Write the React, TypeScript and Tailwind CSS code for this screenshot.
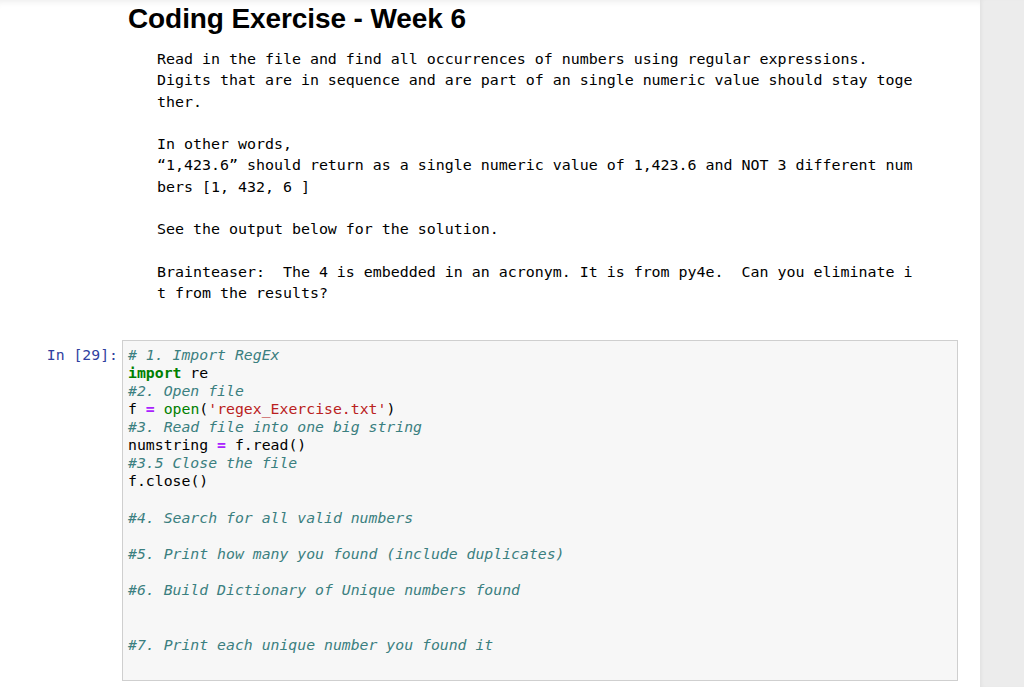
const mono = "font-['DejaVu_Sans_Mono','Liberation_Mono',monospace]";

const mdLines = [
  "Read in the file and find all occurrences of numbers using regular expressions.",
  "Digits that are in sequence and are part of an single numeric value should stay toge",
  "ther.",
  "",
  "In other words,",
  "\u201c1,423.6\u201d should return as a single numeric value of 1,423.6 and NOT 3 different num",
  "bers [1, 432, 6 ]",
  "",
  "See the output below for the solution.",
  "",
  "Brainteaser:  The 4 is embedded in an acronym. It is from py4e.  Can you eliminate i",
  "t from the results?",
];

function Comment({ children }: { children: React.ReactNode }) {
  return <span className="italic text-[#3b7f80]">{children}</span>;
}

function Op({ children }: { children: React.ReactNode }) {
  return <span className="font-bold text-[#aa22ff]">{children}</span>;
}

export default function App() {
  return (
    <div className="flex h-[687px] w-[1024px] overflow-hidden bg-white">
      <main className="w-[980px] shadow-[inset_0_7px_6px_-5px_rgba(0,0,0,0.07)]">
        <div className="pl-[128px]">
          <h1 className="font-['Liberation_Sans',Arial,sans-serif] text-[28px] font-bold leading-[38px] tracking-[-0.1px] text-black">
            Coding Exercise - Week 6
          </h1>
        </div>

        <div className={`mt-[11px] pl-[157px] text-[14.95px] leading-[21.3px] text-black ${mono}`}>
          {mdLines.map((line, i) => (
            <div key={i} className="h-[21.3px] whitespace-pre">
              {line}
            </div>
          ))}
        </div>

        <div className="mt-[35px] flex">
          <div className={`w-[122px] pr-[4px] pt-[6px] text-right text-[14.8px] leading-[18.125px] text-[#303f9f] ${mono}`}>
            In [29]:
          </div>
          <div
            className={`h-[341px] w-[836px] border border-[#cfcfcf] bg-[#f7f7f7] pl-[5px] pt-[5px] text-[14.8px] leading-[18.125px] text-black ${mono} whitespace-pre`}
          >
            <div><Comment># 1. Import RegEx</Comment></div>
            <div><span className="font-bold text-[#008000]">import</span> re</div>
            <div><Comment>#2. Open file</Comment></div>
            <div>
              f <Op>=</Op> <span className="text-[#008000]">open</span>(<span className="text-[#ba2121]">'regex_Exercise.txt'</span>)
            </div>
            <div><Comment>#3. Read file into one big string</Comment></div>
            <div>numstring <Op>=</Op> f<span>.</span>read()</div>
            <div><Comment>#3.5 Close the file</Comment></div>
            <div>f<span>.</span>close()</div>
            <div>&nbsp;</div>
            <div><Comment>#4. Search for all valid numbers</Comment></div>
            <div>&nbsp;</div>
            <div><Comment>#5. Print how many you found (include duplicates)</Comment></div>
            <div>&nbsp;</div>
            <div><Comment>#6. Build Dictionary of Unique numbers found</Comment></div>
            <div>&nbsp;</div>
            <div>&nbsp;</div>
            <div><Comment>#7. Print each unique number you found it</Comment></div>
          </div>
        </div>
      </main>
      <aside className="flex-1 bg-[#ececec] shadow-[inset_3px_0_4px_-2px_rgba(0,0,0,0.06)]" />
    </div>
  );
}
